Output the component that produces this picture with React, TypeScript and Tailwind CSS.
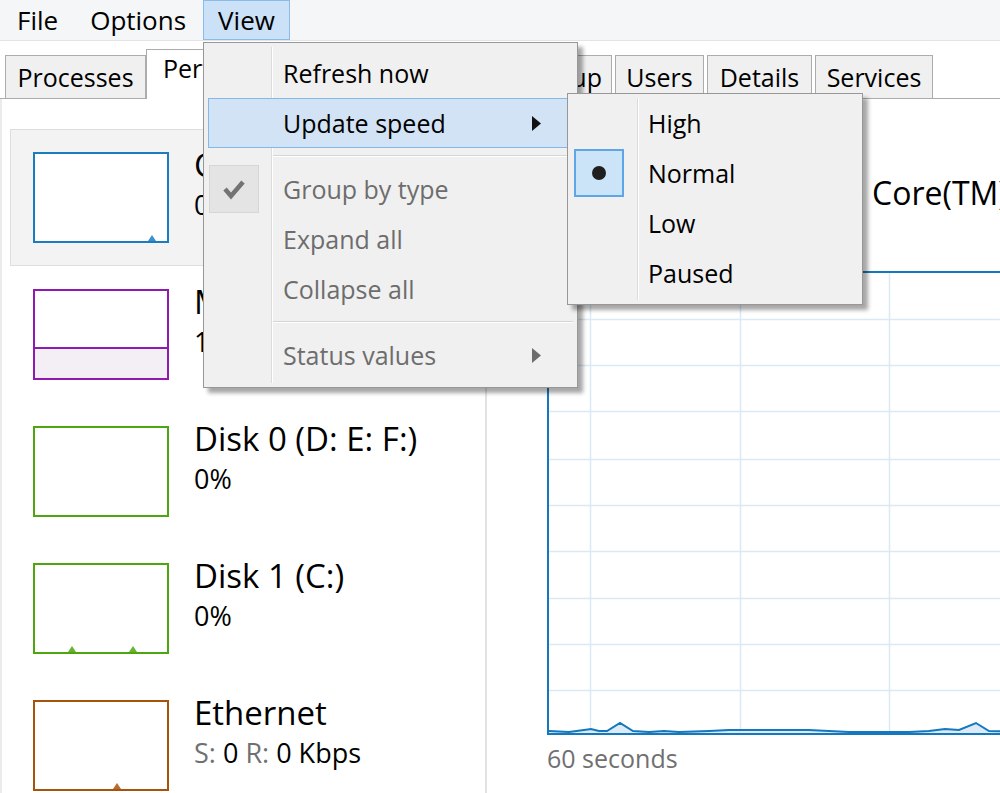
import React from "react";

const ThumbLine = ({ color, spikes }: { color: string; spikes: number[] }) => (
  <svg className="absolute inset-0" width="132" height="87" viewBox="0 0 132 87">
    {spikes.map((x, i) => (
      <polygon key={i} points={`${x - 4},87 ${x},81 ${x + 4},87`} fill={color} opacity="0.85" />
    ))}
  </svg>
);

function Thumb({ color, spikes = [], memory = false }: { color: string; spikes?: number[]; memory?: boolean }) {
  return (
    <div className="relative w-[136px] h-[91px] shrink-0 bg-white border-2 flex flex-col" style={{ borderColor: color }}>
      {memory ? (
        <>
          <div className="h-[56px]" />
          <div className="flex-1 bg-[#f3eff5] border-t-2" style={{ borderColor: color }} />
        </>
      ) : (
        <ThumbLine color={color} spikes={spikes} />
      )}
    </div>
  );
}

function SideItem({
  title,
  sub,
  color,
  spikes,
  memory,
  selected,
}: {
  title: string;
  sub: React.ReactNode;
  color: string;
  spikes?: number[];
  memory?: boolean;
  selected?: boolean;
}) {
  return (
    <div
      className={
        "flex h-[137px] w-[464px] shrink-0 border pl-[22px] pt-[22px] " +
        (selected ? "bg-[#f3f3f3] border-[#dedede]" : "border-transparent")
      }
    >
      <Thumb color={color} spikes={spikes} memory={memory} />
      <div className="ml-[25px] -mt-[7px] whitespace-nowrap">
        <div className="text-[33px] leading-[40px]">{title}</div>
        <div className="text-[27px] leading-[40px]">{sub}</div>
      </div>
    </div>
  );
}

function Tab({ label, w, active, align = "center" }: { label: string; w: string; active?: boolean; align?: string }) {
  if (active) {
    return (
      <div className={`${w} h-[50px] -mb-px bg-white border border-b-0 border-[#acacac] flex items-start pt-[6px] pl-[16px] shrink-0`}>
        {label}
      </div>
    );
  }
  return (
    <div
      className={`${w} h-[43px] bg-[#f0f0f0] border border-b-0 border-[#acacac] flex items-center shrink-0 ${
        align === "end" ? "justify-end pr-[9px]" : "justify-center"
      }`}
    >
      {label}
    </div>
  );
}

function MenuItem({
  label,
  disabled,
  highlight,
  check,
  radio,
  arrow,
}: {
  label: string;
  disabled?: boolean;
  highlight?: boolean;
  check?: boolean;
  radio?: boolean;
  arrow?: boolean;
}) {
  return (
    <div
      className={
        "relative flex h-[50px] items-stretch border " +
        (highlight ? "bg-[#d1e3f4] border-[#84b8ea]" : "border-transparent")
      }
    >
      <div className="w-[63px] shrink-0 flex items-stretch">
        {check && (
          <div className="w-[50px] bg-[#e4e4e4] border border-[#d6d6d6] flex items-center justify-center">
            <svg width="26" height="24" viewBox="0 0 26 24">
              <path d="M4 12 L10 19 L22 5" fill="none" stroke="#737373" strokeWidth="4.5" strokeLinejoin="miter" />
            </svg>
          </div>
        )}
        {radio && (
          <div className="w-[50px] bg-[#cce4f7] border-2 border-[#5fa6e6] flex items-center justify-center">
            <div className="w-[14px] h-[14px] rounded-full bg-[#1f1f1f]" />
          </div>
        )}
      </div>
      <div
        className={
          "flex-1 flex items-center pl-[11px] text-[25px] " + (disabled ? "text-[#6d6d6d]" : "text-black")
        }
      >
        {label}
      </div>
      {arrow && (
        <div className="w-[40px] flex items-center">
          <svg width="10" height="15" viewBox="0 0 10 15">
            <polygon points="0,0 9,7.5 0,15" fill={disabled ? "#6d6d6d" : "#111"} />
          </svg>
        </div>
      )}
    </div>
  );
}

function Separator() {
  return (
    <div className="h-[16px] flex flex-col justify-center pl-[65px]">
      <div className="h-px bg-[#d5d5d5]" />
      <div className="h-px bg-white" />
    </div>
  );
}

export default function App() {
  const hLines = [46, 92, 138, 186, 232, 278, 325, 371, 417];
  const vLines = [41, 191, 340, 490];
  const pts =
    "0,458 20,459 35,457 42,456 50,458 58,458 71,450 84,458 100,459 115,458 130,459 160,458 180,457 260,457 300,459 360,459 380,458 396,456 410,457 427,450 440,458 516,459";
  return (
    <div className="relative w-[1000px] h-[793px] overflow-hidden bg-white text-black font-['Open_Sans',sans-serif] leading-none">
      {/* Menu bar */}
      <div className="flex h-[40px] bg-[#f5f6f7] pl-[2px] gap-[2px] text-[26px]">
        <div className="flex items-center px-[15px]">File</div>
        <div className="flex items-center px-[15px]">Options</div>
        <div className="flex items-center px-[14px] bg-[#cae1f7] border border-[#8cbbe9]">View</div>
      </div>
      <div className="h-px bg-[#e4e4e4]" />

      {/* Tabs */}
      <div className="flex h-[58px] items-end border-b border-[#acacac] pl-[5px] text-[25px]">
        <Tab label="Processes" w="w-[141px]" />
        <Tab label="Performance" w="w-[160px]" active />
        <div className="w-[2px]" />
        <Tab label="App history" w="w-[147px]" />
        <div className="w-[2px]" />
        <Tab label="Startup" w="w-[155px]" align="end" />
        <div className="w-[3px]" />
        <Tab label="Users" w="w-[89px]" />
        <div className="w-[3px]" />
        <Tab label="Details" w="w-[105px]" />
        <div className="w-[3px]" />
        <Tab label="Services" w="w-[118px]" />
      </div>

      {/* Main */}
      <div className="flex h-[694px]">
        <div className="w-[487px] shrink-0 border-l-2 border-l-[#ebebeb] border-r-2 border-r-[#e2e2e2] pt-[30px] pl-[8px] flex flex-col overflow-hidden">
          <SideItem title="CPU" sub="0% 0.87 GHz" color="#1a7dc0" spikes={[117]} selected />
          <SideItem title="Memory" sub="1.6/3.9 GB (41%)" color="#8e1ab0" memory />
          <SideItem title="Disk 0 (D: E: F:)" sub="0%" color="#4ea60f" />
          <SideItem title="Disk 1 (C:)" sub="0%" color="#4ea60f" spikes={[37, 98]} />
          <SideItem
            title="Ethernet"
            sub={
              <span>
                <span className="text-[#707070]">S:</span> 0 <span className="text-[#707070]">R:</span> 0 Kbps
              </span>
            }
            color="#a8530c"
            spikes={[82]}
          />
        </div>

        <div className="flex-1 overflow-hidden pl-[60px] pt-[74px] flex flex-col">
          <div className="flex h-[40px] items-center whitespace-nowrap text-[32px] leading-[40px]">
            <span className="flex w-[325px] shrink-0 justify-between">
              <span className="text-[40px]">CPU</span>
              <span>Intel(R)&nbsp;</span>
            </span>
            <span>Core(TM) i5-3317U CPU @ 1.70GHz</span>
          </div>
          <div className="h-[58px] flex items-end pb-[4px] text-[22px] text-[#707070] w-[520px] shrink-0 justify-between">
            <span>% Utilization</span>
            <span>100%</span>
          </div>
          <div className="relative w-[520px] h-[464px] shrink-0 border-2 border-[#1578bd] bg-white">
            <svg className="absolute inset-0" width="516" height="460" viewBox="0 0 516 460">
              {hLines.map((y) => (
                <line key={y} x1="0" x2="516" y1={y + 0.5} y2={y + 0.5} stroke="#d9e9f6" strokeWidth="1.5" />
              ))}
              {vLines.map((x) => (
                <line key={x} y1="0" y2="460" x1={x + 0.5} x2={x + 0.5} stroke="#d9e9f6" strokeWidth="1.5" />
              ))}
              <polygon points={`0,460 ${pts} 516,460`} fill="#dcebf7" />
              <polyline points={pts} fill="none" stroke="#1578bd" strokeWidth="2" />
            </svg>
          </div>
          <div className="mt-[7px] text-[25px] leading-[32px] text-[#707070]">60 seconds</div>
        </div>
      </div>

      {/* View menu */}
      <div className="absolute left-[203px] top-[42px] w-[375px] h-[346px] bg-[#f0f0f0] border border-[#979797] shadow-[5px_5px_4px_rgba(0,0,0,0.35)] px-[4px] pt-[5px]">
        <div className="absolute left-[67px] top-[4px] bottom-[4px] w-px bg-[#dcdcdc]" />
        <div className="absolute left-[68px] top-[4px] bottom-[4px] w-px bg-white" />
        <MenuItem label="Refresh now" />
        <MenuItem label="Update speed" highlight arrow />
        <Separator />
        <MenuItem label="Group by type" disabled check />
        <MenuItem label="Expand all" disabled />
        <MenuItem label="Collapse all" disabled />
        <Separator />
        <MenuItem label="Status values" disabled arrow />
      </div>

      {/* Update speed submenu */}
      <div className="absolute left-[567px] top-[93px] w-[296px] h-[212px] bg-[#f0f0f0] border border-[#979797] shadow-[5px_5px_4px_rgba(0,0,0,0.35)] px-[5px] pt-[4px]">
        <div className="absolute left-[69px] top-[4px] bottom-[4px] w-px bg-[#dcdcdc]" />
        <div className="absolute left-[70px] top-[4px] bottom-[4px] w-px bg-white" />
        <MenuItem label="High" />
        <MenuItem label="Normal" radio />
        <MenuItem label="Low" />
        <MenuItem label="Paused" />
      </div>
    </div>
  );
}
